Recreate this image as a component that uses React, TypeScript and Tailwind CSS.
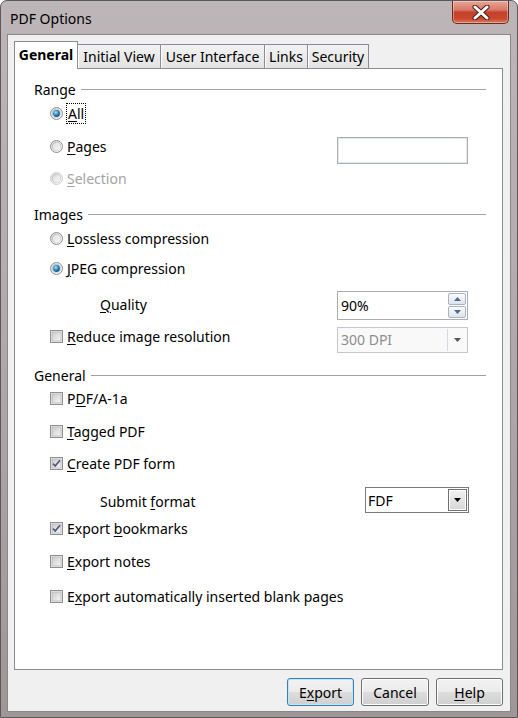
import type { ReactNode } from 'react'

const font = { fontFamily: '"Noto Sans", "Open Sans", sans-serif' }

function U({ children }: { children: ReactNode }) {
  return <span className="underline underline-offset-2 decoration-1">{children}</span>
}

function Radio({ checked, disabled }: { checked?: boolean; disabled?: boolean }) {
  return (
    <svg width="13" height="13" viewBox="0 0 13 13" className="shrink-0">
      <defs>
        <linearGradient id="rb" x1="0" y1="0" x2="1" y2="1">
          <stop offset="0" stopColor={disabled ? '#d2d2d2' : '#b8b8b8'} />
          <stop offset="1" stopColor={disabled ? '#e6e6e6' : '#dcdcdc'} />
        </linearGradient>
        <linearGradient id="rf" x1="0" y1="0" x2="1" y2="1">
          <stop offset="0" stopColor={disabled ? '#f2f2f2' : '#d8d8d8'} />
          <stop offset="1" stopColor="#ffffff" />
        </linearGradient>
        <radialGradient id="rd" cx="0.4" cy="0.35" r="0.7">
          <stop offset="0" stopColor="#b6e4fb" />
          <stop offset="0.5" stopColor="#2c8cc8" />
          <stop offset="1" stopColor="#0b4a73" />
        </radialGradient>
      </defs>
      <circle cx="6.5" cy="6.5" r="6" fill="url(#rf)" stroke={disabled ? '#cfcfcf' : '#8f8f8f'} strokeWidth="1" />
      <circle cx="6.5" cy="6.5" r="4.2" fill="none" stroke="url(#rb)" strokeWidth="1" />
      {checked && <circle cx="6.5" cy="6.5" r="3.4" fill="url(#rd)" />}
    </svg>
  )
}

function Check({ checked }: { checked?: boolean }) {
  return (
    <svg width="13" height="13" viewBox="0 0 13 13" className="shrink-0">
      <defs>
        <linearGradient id="cb" x1="0" y1="0" x2="1" y2="1">
          <stop offset="0" stopColor="#cbcbcb" />
          <stop offset="1" stopColor="#f6f6f6" />
        </linearGradient>
      </defs>
      <rect x="0.5" y="0.5" width="12" height="12" fill="#f4f4f4" stroke="#8f8f8f" />
      <rect x="2" y="2" width="9" height="9" fill="url(#cb)" stroke="#b4b4b4" strokeWidth="0.8" />
      {checked && (
        <path d="M3 6.6 L5.2 9 L10 3.3" fill="none" stroke="#4a5a86" strokeWidth="1.7" strokeLinejoin="round" />
      )}
    </svg>
  )
}

function Header({ label, mt }: { label: string; mt: string }) {
  return (
    <div className={`flex items-center h-5 pl-[19px] pr-[16px] ${mt}`}>
      <span>{label}</span>
      <div className="flex-1 h-px bg-[#a0a0a0] ml-[5px]" />
    </div>
  )
}

function Option({
  kind,
  checked,
  disabled,
  mt,
  children,
  right,
}: {
  kind: 'radio' | 'check'
  checked?: boolean
  disabled?: boolean
  mt: string
  children: ReactNode
  right?: ReactNode
}) {
  return (
    <div className={`flex items-center h-5 pl-[35px] pr-[34px] ${mt}`}>
      {kind === 'radio' ? <Radio checked={checked} disabled={disabled} /> : <Check checked={checked} />}
      <span className={`ml-[4px] ${disabled ? 'text-[#a3a3a3]' : ''}`}>{children}</span>
      {right}
    </div>
  )
}

function Triangle({ color, up }: { color: string; up?: boolean }) {
  return (
    <svg width="7" height="4" viewBox="0 0 7 4">
      <path d={up ? 'M0 4 L3.5 0 L7 4 Z' : 'M0 0 L7 0 L3.5 4 Z'} fill={color} />
    </svg>
  )
}

function Button({ children, primary }: { children: ReactNode; primary?: boolean }) {
  return (
    <button
      className={`h-[28px] rounded-[3px] border ${
        primary ? 'border-[#3c7fb1] shadow-[inset_0_0_0_1px_#bfe6fb]' : 'border-[#707070] shadow-[inset_0_0_0_1px_#fcfcfc]'
      } bg-[linear-gradient(#f2f2f2_0%,#ebebeb_50%,#dddddd_51%,#cfcfcf_100%)] text-[14px] text-black`}
    >
      {children}
    </button>
  )
}

export default function App() {
  return (
    <div
      style={font}
      className="w-[518px] h-[718px] flex flex-col border border-[#5e5759] rounded-t-[7px] bg-[linear-gradient(180deg,#bdb6b8_0%,#b3abad_40%,#9f9698_100%)] text-[14px] text-black overflow-hidden"
    >
      {/* title bar */}
      <div className="h-[33px] flex items-start shrink-0">
        <span className="pl-[9px] pt-[8px] text-[14px] leading-5">PDF Options</span>
        <div className="ml-auto mr-[8px] w-[57px] h-[23px] rounded-b-[5px] border border-t-0 border-[#6b2a22] flex items-center justify-center bg-[linear-gradient(180deg,#e8a596_0%,#d97a68_40%,#c4402a_52%,#c9482f_80%,#dc7a5e_100%)] shadow-[inset_0_0_0_1px_rgba(255,255,255,0.35)]">
          <svg width="18" height="15" viewBox="0 0 18 15">
            <path d="M3 2 L15 13 M15 2 L3 13" stroke="#4a1a14" strokeWidth="5" strokeLinecap="round" />
            <path d="M3 2 L15 13 M15 2 L3 13" stroke="#ffffff" strokeWidth="3" strokeLinecap="round" />
          </svg>
        </div>
      </div>

      {/* client area */}
      <div className="mx-[6px] mb-[5px] flex-1 flex flex-col bg-[#f0f0f0] border border-[#8d8688] pl-[6px] pr-[7px] pt-[6px] pb-[5px]">
        {/* tabs */}
        <div className="h-[27px] flex items-end shrink-0">
          <div className="relative z-10 w-[64px] h-[28px] -mb-px bg-white border border-b-0 border-[#898c95] flex items-center justify-center font-bold pb-[2px]">
            General
          </div>
          {[
            ['Initial View', 'w-[83px]'],
            ['User Interface', 'w-[104px]'],
            ['Links', 'w-[43px]'],
            ['Security', 'w-[61px]'],
          ].map(([t, w]) => (
            <div
              key={t}
              className={`${w} h-[24px] border border-b-0 border-l-0 border-[#898c95] bg-[linear-gradient(#f2f2f2,#e3e3e3)] flex items-center justify-center shadow-[inset_1px_0_0_#ffffff]`}
            >
              {t}
            </div>
          ))}
        </div>

        {/* panel */}
        <div className="h-[602px] bg-white border border-[#898c95] pt-[10px] shrink-0">
          <Header label="Range" mt="mt-0" />
          <Option kind="radio" checked mt="mt-[4px]">
            <span className="outline outline-1 outline-dotted outline-black outline-offset-0 px-px">
              <U>A</U>ll
            </span>
          </Option>
          <Option
            kind="radio"
            mt="mt-[13px]"
            right={<div className="ml-auto mt-[9px] w-[131px] h-[27px] border border-[#abadb3] bg-white shrink-0 shadow-[inset_0_0_0_1px_#e3e9ef]" />}
          >
            <U>P</U>ages
          </Option>
          <Option kind="radio" disabled mt="mt-[12px]">
            <U>S</U>election
          </Option>

          <Header label="Images" mt="mt-[16px]" />
          <Option kind="radio" mt="mt-[4px]">
            <U>L</U>ossless compression
          </Option>
          <Option kind="radio" checked mt="mt-[10px]">
            <U>J</U>PEG compression
          </Option>
          <div className="flex items-center h-5 pl-[85px] pr-[34px] mt-[16px]">
            <span>
              <U>Q</U>uality
            </span>
            <div className="ml-auto mt-[3px] w-[131px] h-[29px] border border-[#abadb3] bg-white flex items-center shrink-0">
              <span className="pl-[3px] flex-1">90%</span>
              <div className="flex flex-col gap-px mr-[1px]">
                {[true, false].map((up) => (
                  <div
                    key={String(up)}
                    className="w-[18px] h-[12px] rounded-[2px] border border-[#a9b3c0] bg-[linear-gradient(#fafbfc,#dfe4ea)] flex items-center justify-center"
                  >
                    <Triangle color="#4d6a94" up={up} />
                  </div>
                ))}
              </div>
            </div>
          </div>
          <Option
            kind="check"
            mt="mt-[12px]"
            right={
              <div className="ml-auto mt-[7px] w-[131px] h-[26px] border border-[#c3c8d0] bg-[#f9f9f9] flex items-center shrink-0">
                <span className="pl-[3px] flex-1 text-[#8d8d8d]">300 DPI</span>
                <div className="w-[19px] h-[22px] mr-[1px] border-l border-[#d6dae0] flex items-center justify-center">
                  <Triangle color="#555555" />
                </div>
              </div>
            }
          >
            <U>R</U>educe image resolution
          </Option>

          <Header label="General" mt="mt-[19px]" />
          <Option kind="check" mt="mt-[3px]">
            P<U>D</U>F/A-1a
          </Option>
          <Option kind="check" mt="mt-[13px]">
            <U>T</U>agged PDF
          </Option>
          <Option kind="check" checked mt="mt-[12px]">
            <U>C</U>reate PDF form
          </Option>
          <div className="flex items-center h-5 pl-[85px] pr-[33px] mt-[18px]">
            <span>
              Submit <U>f</U>ormat
            </span>
            <div className="ml-auto mb-[2px] w-[104px] h-[26px] border border-[#7a7a7a] bg-white flex items-center shrink-0">
              <span className="pl-[2px] flex-1">FDF</span>
              <div className="w-[19px] h-[22px] mr-[1px] border border-[#707070] bg-[linear-gradient(#f2f2f2,#d6d6d6)] shadow-[inset_0_0_0_1px_#ffffff] flex items-center justify-center">
                <Triangle color="#000000" />
              </div>
            </div>
          </div>
          <Option kind="check" checked mt="mt-[7px]">
            Export <U>b</U>ookmarks
          </Option>
          <Option kind="check" mt="mt-[13px]">
            <U>E</U>xport notes
          </Option>
          <Option kind="check" mt="mt-[15px]">
            E<U>x</U>port automatically inserted blank pages
          </Option>
        </div>

        {/* buttons */}
        <div className="mt-[8px] flex justify-end gap-[7px]">
          <div className="w-[67px] flex flex-col">
            <Button primary>
              E<U>x</U>port
            </Button>
          </div>
          <div className="w-[68px] flex flex-col">
            <Button>Cancel</Button>
          </div>
          <div className="w-[67px] flex flex-col">
            <Button>
              <U>H</U>elp
            </Button>
          </div>
        </div>
      </div>
    </div>
  )
}
